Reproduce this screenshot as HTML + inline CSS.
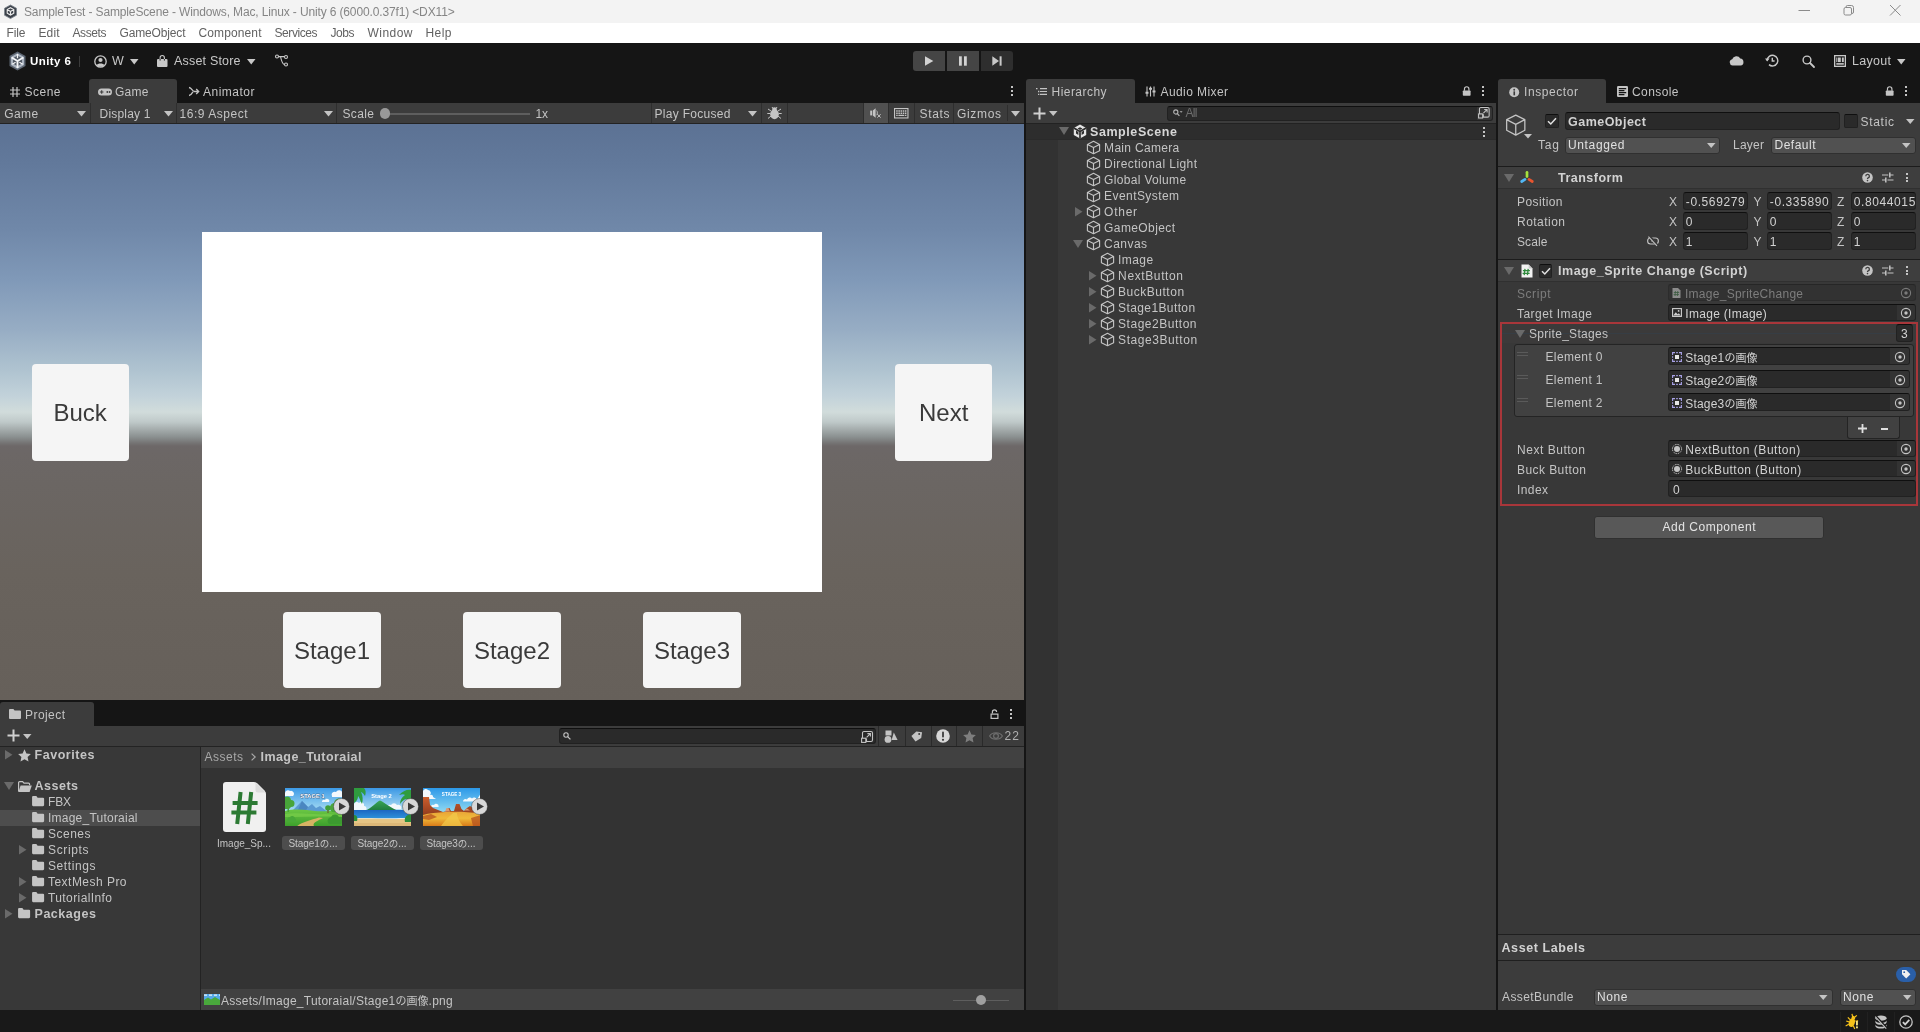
<!DOCTYPE html>
<html lang="ja">
<head>
<meta charset="utf-8">
<title>SampleTest - SampleScene - Windows, Mac, Linux - Unity 6 (6000.0.37f1) &lt;DX11&gt;</title>
<style>
*{box-sizing:border-box;margin:0;padding:0}
html,body{width:1920px;height:1032px;overflow:hidden;background:#151515}
body{position:relative;font-family:"Liberation Sans","Noto Sans CJK JP",sans-serif;font-size:12px;color:#c4c4c4;line-height:1}
.a{position:absolute}
.t{position:absolute;white-space:nowrap;line-height:16px;height:16px}
#root{position:absolute;left:0;top:0;width:1920px;height:1032px;will-change:transform}
.b{font-weight:bold}
svg{position:absolute;overflow:visible}
.fld{position:absolute;background:#2a2a2a;border:1px solid #212121;border-top-color:#0f0f0f;border-radius:3px}
.dd{position:absolute;background:#515151;border:1px solid #303030;border-radius:3px}
.tab{position:absolute;background:#3c3c3c;border-radius:3px 3px 0 0}
.gbtn{position:absolute;background:#f5f5f5;border-radius:4px;color:#3a3a3a;font-size:24px;text-align:center}
</style>
</head>
<body>
<div id="root">
<!-- chrome -->
<div class="a" style="left:0px;top:0px;width:1920px;height:23px;background:#f3f3f3;"></div>
<div class="a" style="left:0px;top:23px;width:1920px;height:20px;background:#ffffff;"></div>
<svg style="left:3px;top:3.5px;" width="15" height="15.5" viewBox="0 0 17 17"><path d="M8.5 0.8 L15.3 4.6 V12.4 L8.5 16.2 L1.7 12.4 V4.6 Z" fill="#3b4149" stroke="#7f8790" stroke-width="1"/><path d="M8.5 3.9 L12.2 6 V10.2 L8.5 12.3 L4.8 10.2 V6 Z M8.5 8.1 V12.3 M8.5 8.1 L4.8 6 M8.5 8.1 L12.2 6" fill="none" stroke="#ececec" stroke-width="1.3"/></svg>
<div class="t" style="left:24px;top:4px;color:#858585;letter-spacing:-0.14px;">SampleTest - SampleScene - Windows, Mac, Linux - Unity 6 (6000.0.37f1) &lt;DX11&gt;</div>
<svg style="left:1798px;top:4px;" width="110" height="14" viewBox="0 0 110 14"><g fill="none" stroke="#858585" stroke-width="0.95"><path d="M0.5 6.5 H12"/><rect x="46" y="3.5" width="7.5" height="7.5" rx="1.5"/><path d="M48 3.5 V3 a1.5 1.5 0 0 1 1.5 -1.5 H53.5 a2 2 0 0 1 2 2 V8 a1.5 1.5 0 0 1 -1.5 1.5 H53.5"/><path d="M92 1 L102.5 11.5 M102.5 1 L92 11.5"/></g></svg>
<div class="t" style="left:6.5px;top:25px;color:#626262;letter-spacing:-0.11px;">File</div>
<div class="t" style="left:38.5px;top:25px;color:#626262;letter-spacing:0.10px;">Edit</div>
<div class="t" style="left:72.5px;top:25px;color:#626262;letter-spacing:-0.40px;">Assets</div>
<div class="t" style="left:119.5px;top:25px;color:#626262;letter-spacing:-0.15px;">GameObject</div>
<div class="t" style="left:198.5px;top:25px;color:#626262;letter-spacing:0.12px;">Component</div>
<div class="t" style="left:274.5px;top:25px;color:#626262;letter-spacing:-0.43px;">Services</div>
<div class="t" style="left:330.5px;top:25px;color:#626262;letter-spacing:-0.45px;">Jobs</div>
<div class="t" style="left:367.5px;top:25px;color:#626262;letter-spacing:0.46px;">Window</div>
<div class="t" style="left:425.5px;top:25px;color:#626262;letter-spacing:0.44px;">Help</div>
<!-- toolbar -->
<div class="a" style="left:0px;top:43px;width:1920px;height:60px;background:#151515;"></div>
<svg style="left:9px;top:51px;" width="17" height="20" viewBox="0 0 17 20"><path d="M8.5 0.5 L16.5 5.1 V14.9 L8.5 19.5 L0.5 14.9 V5.1 Z" fill="#5d6673"/><path d="M8.5 2.2 L15 5.95 V14.05 L8.5 17.8 L2 14.05 V5.95 Z" fill="#aab3bf"/><path d="M8.5 4.6 L12.9 7.2 V12.6 L8.5 15.2 L4.1 12.6 V7.2 Z" fill="#4a525d"/><path d="M8.5 10 V17 M8.5 10 L2.6 6.5 M8.5 10 L14.4 6.5" stroke="#f4f6f8" stroke-width="1.9" fill="none"/><path d="M8.5 3 V7.2 M3.2 13.2 L6.6 11.2 M13.8 13.2 L10.4 11.2" stroke="#f4f6f8" stroke-width="1.3" fill="none"/></svg>
<div class="t b" style="left:30px;top:53px;font-size:11.5px;color:#ffffff;letter-spacing:0.44px;">Unity 6</div>
<div class="a" style="left:79px;top:55.5px;width:1px;height:11px;background:#3a3a3a;"></div>
<svg style="left:94px;top:54.5px;" width="13" height="13" viewBox="0 0 13 13"><circle cx="6.5" cy="6.5" r="5.7" fill="none" stroke="#c8c8c8" stroke-width="1.3"/><circle cx="6.5" cy="5" r="2.1" fill="#c8c8c8"/><path d="M2.6 10.2 C3.4 7.9 9.6 7.9 10.4 10.2 A5.7 5.7 0 0 1 2.6 10.2 Z" fill="#c8c8c8"/></svg>
<div class="t" style="left:112px;top:53px;font-size:12.5px;color:#c8c8c8;">W</div>
<svg style="left:129.75px;top:58.8px;" width="8.5" height="5.4" viewBox="0 0 8.5 5.4"><path d="M0 0 H8.5 L4.25 5.4 Z" fill="#c8c8c8"/></svg>
<svg style="left:157px;top:54.5px;" width="10.5" height="12" viewBox="0 0 10.5 12"><path d="M3.1 4.2 V2.7 A2.15 2.15 0 0 1 7.4 2.7 V4.2" fill="none" stroke="#c8c8c8" stroke-width="1.1"/><rect x="0" y="4" width="10.5" height="8" rx="1" fill="#c8c8c8"/><path d="M3.1 4 V5.6 M7.4 4 V5.6" stroke="#151515" stroke-width="0.9"/></svg>
<div class="t" style="left:174px;top:53px;font-size:12.5px;color:#c8c8c8;letter-spacing:0.19px;">Asset Store</div>
<svg style="left:246.75px;top:58.8px;" width="8.5" height="5.4" viewBox="0 0 8.5 5.4"><path d="M0 0 H8.5 L4.25 5.4 Z" fill="#c8c8c8"/></svg>
<svg style="left:274.5px;top:54px;" width="13" height="13" viewBox="0 0 13 13"><g fill="none" stroke="#c8c8c8" stroke-width="1.1"><circle cx="2" cy="2.5" r="1.5"/><circle cx="11" cy="3" r="1.5"/><circle cx="11" cy="10.5" r="1.5"/><path d="M3.5 2.6 H9.5 M5.5 2.6 C6.5 7 7.5 10.5 9.5 10.5"/></g></svg>
<div class="a" style="left:913px;top:51px;width:32px;height:20px;background:#454545;border-radius:3px 0 0 3px"></div>
<div class="a" style="left:946.5px;top:51px;width:32.5px;height:20px;background:#454545;"></div>
<div class="a" style="left:980.5px;top:51px;width:32px;height:20px;background:#2e2e2e;border-radius:0 3px 3px 0"></div>
<svg style="left:924px;top:56px;" width="10" height="10" viewBox="0 0 10 10"><path d="M1 0.3 L9.3 5 L1 9.7 Z" fill="#d2d2d2"/></svg>
<svg style="left:958px;top:56px;" width="10" height="10" viewBox="0 0 10 10"><rect x="1" y="0.3" width="2.8" height="9.4" fill="#d2d2d2"/><rect x="6" y="0.3" width="2.8" height="9.4" fill="#d2d2d2"/></svg>
<svg style="left:992px;top:56px;" width="10" height="10" viewBox="0 0 10 10"><path d="M0.3 0.3 L7 5 L0.3 9.7 Z" fill="#c8c8c8"/><rect x="7.6" y="0.3" width="2" height="9.4" fill="#c8c8c8"/></svg>
<svg style="left:1729px;top:55px;" width="15" height="11" viewBox="0 0 15 11"><path d="M3.6 10.6 A3.2 3.2 0 0 1 3.2 4.3 A4.4 4.4 0 0 1 11.3 3.5 A3.6 3.6 0 0 1 11.6 10.6 Z" fill="#c8c8c8"/></svg>
<svg style="left:1765px;top:54px;" width="14" height="13" viewBox="0 0 14 13"><g fill="none" stroke="#c8c8c8" stroke-width="1.4"><path d="M2.2 6.5 A5.3 5.3 0 1 1 4 10.6"/><path d="M7.3 3.8 V7 H9.6"/></g><path d="M0 4.6 L4.6 4.6 L2.2 7.6 Z" fill="#c8c8c8"/></svg>
<svg style="left:1801.5px;top:54.5px;" width="13" height="13" viewBox="0 0 13 13"><circle cx="5" cy="5" r="3.9" fill="none" stroke="#c8c8c8" stroke-width="1.4"/><path d="M8 8 L12 12" stroke="#c8c8c8" stroke-width="1.8" stroke-linecap="round"/></svg>
<svg style="left:1834px;top:54.8px;" width="12" height="12" viewBox="0 0 12 12"><rect x="0.65" y="0.65" width="10.7" height="10.7" fill="none" stroke="#c8c8c8" stroke-width="1.3"/><rect x="2.3" y="2.5" width="1" height="4.6" fill="#c8c8c8"/><rect x="3.9" y="2.5" width="2.9" height="4.6" fill="#c8c8c8"/><rect x="7.9" y="2.5" width="1.9" height="4.6" fill="#c8c8c8"/><rect x="2.3" y="8.1" width="7.5" height="1.6" fill="#c8c8c8"/></svg>
<div class="t" style="left:1852px;top:53px;font-size:12.5px;color:#c8c8c8;letter-spacing:0.29px;">Layout</div>
<svg style="left:1897.05px;top:58.8px;" width="8.5" height="5.4" viewBox="0 0 8.5 5.4"><path d="M0 0 H8.5 L4.25 5.4 Z" fill="#c8c8c8"/></svg>
<svg style="left:9.5px;top:86.5px;" width="10" height="10" viewBox="0 0 10 10"><path d="M3 0 V10 M7 0 V10 M0 3 H10 M0 7 H10" stroke="#c4c4c4" stroke-width="1.2" fill="none"/></svg>
<div class="t" style="left:24.5px;top:84px;color:#c4c4c4;letter-spacing:0.49px;">Scene</div>
<div class="tab" style="left:89px;top:79px;width:88px;height:24px;"></div>
<svg style="left:98px;top:87.5px;" width="14" height="8" viewBox="0 0 14 8"><rect x="0" y="0.5" width="14" height="7" rx="3.5" fill="#c4c4c4"/><path d="M3.7 2.2 V5.8 M1.9 4 H5.5" stroke="#3c3c3c" stroke-width="1.1"/><circle cx="9.3" cy="4" r="0.9" fill="#3c3c3c"/><circle cx="11.6" cy="4" r="0.9" fill="#3c3c3c"/></svg>
<div class="t" style="left:115px;top:84px;letter-spacing:0.27px;">Game</div>
<svg style="left:188px;top:86px;" width="11" height="11" viewBox="0 0 11 11"><path d="M1 1.5 C4 2 4 5.5 6.5 5.5 H10.5 M1 9.5 C3 9.5 4 7.5 5 5.8 M8.2 3 L10.7 5.5 L8.2 8" fill="none" stroke="#c4c4c4" stroke-width="1.3"/></svg>
<div class="t" style="left:203px;top:84px;letter-spacing:0.50px;">Animator</div>
<div class="a" style="left:1010.5px;top:86.2px;width:2px;height:2.1px;background:#c4c4c4;"></div>
<div class="a" style="left:1010.5px;top:90px;width:2px;height:2.1px;background:#c4c4c4;"></div>
<div class="a" style="left:1010.5px;top:93.8px;width:2px;height:2.1px;background:#c4c4c4;"></div>
<!-- game -->
<div class="a" style="left:0px;top:103px;width:1024px;height:20px;background:#3c3c3c;"></div>
<div class="a" style="left:0px;top:123px;width:1024px;height:1px;background:#232323;"></div>
<div class="t" style="left:4.2px;top:105.6px;letter-spacing:0.44px;">Game</div>
<svg style="left:77px;top:110.7px;" width="9" height="5.6" viewBox="0 0 9 5.6"><path d="M0 0 H9 L4.5 5.6 Z" fill="#c4c4c4"/></svg>
<div class="a" style="left:90px;top:103px;width:1px;height:20px;background:#2e2e2e;"></div>
<div class="t" style="left:99.5px;top:105.6px;letter-spacing:0.21px;">Display 1</div>
<svg style="left:163.5px;top:110.7px;" width="9" height="5.6" viewBox="0 0 9 5.6"><path d="M0 0 H9 L4.5 5.6 Z" fill="#c4c4c4"/></svg>
<div class="a" style="left:176px;top:103px;width:1px;height:20px;background:#2e2e2e;"></div>
<div class="t" style="left:179.5px;top:105.6px;letter-spacing:0.53px;">16:9 Aspect</div>
<svg style="left:323.5px;top:110.7px;" width="9" height="5.6" viewBox="0 0 9 5.6"><path d="M0 0 H9 L4.5 5.6 Z" fill="#c4c4c4"/></svg>
<div class="a" style="left:336px;top:103px;width:1px;height:20px;background:#2e2e2e;"></div>
<div class="t" style="left:342.5px;top:105.6px;letter-spacing:0.37px;">Scale</div>
<div class="a" style="left:385px;top:113px;width:145px;height:1.5px;background:#5e5e5e;"></div>
<div class="a" style="left:379.5px;top:108px;width:10.5px;height:10.5px;background:#999999;border-radius:50%"></div>
<div class="t" style="left:535.5px;top:105.6px;letter-spacing:-0.19px;">1x</div>
<div class="a" style="left:651px;top:103px;width:1px;height:20px;background:#2e2e2e;"></div>
<div class="t" style="left:654.5px;top:105.6px;letter-spacing:0.30px;">Play Focused</div>
<svg style="left:748px;top:110.7px;" width="9" height="5.6" viewBox="0 0 9 5.6"><path d="M0 0 H9 L4.5 5.6 Z" fill="#c4c4c4"/></svg>
<div class="a" style="left:760.5px;top:103px;width:1px;height:20px;background:#2e2e2e;"></div>
<svg style="left:766.5px;top:106px;" width="15" height="14" viewBox="0 0 15 14"><g stroke="#c4c4c4" stroke-width="1" fill="none"><path d="M1 3 L4 5 M14 3 L11 5 M0.3 7.5 H3.5 M14.7 7.5 H11.5 M1 12.5 L4 10 M14 12.5 L11 10 M5 1 L6.3 3 M10 1 L8.7 3"/></g><ellipse cx="7.5" cy="8.2" rx="4.3" ry="5" fill="#c4c4c4"/><circle cx="7.5" cy="3.4" r="2.2" fill="#c4c4c4"/></svg>
<div class="a" style="left:786.5px;top:103px;width:1px;height:20px;background:#2e2e2e;"></div>
<div class="a" style="left:863px;top:103px;width:25px;height:20px;background:#505050;"></div>
<div class="a" style="left:862.5px;top:103px;width:1px;height:20px;background:#2e2e2e;"></div>
<div class="a" style="left:888px;top:103px;width:1px;height:20px;background:#2e2e2e;"></div>
<svg style="left:869.5px;top:107.5px;" width="12" height="10" viewBox="0 0 12 10"><rect x="0.2" y="2.6" width="1.9" height="4.8" fill="#c4c4c4"/><path d="M2.8 2.6 L5.6 0.2 V9.8 L2.8 7.4 Z" fill="#c4c4c4"/><path d="M6.6 2.6 C7.6 3.6 7.6 6.2 6.6 7.2" stroke="#c4c4c4" stroke-width="0.9" fill="none"/><path d="M7.4 6.2 L10.6 9.6 M10.6 6.2 L7.4 9.6" stroke="#c4c4c4" stroke-width="1"/></svg>
<svg style="left:893.5px;top:108px;" width="14.5" height="10.5" viewBox="0 0 14.5 10.5"><rect x="0.55" y="0.55" width="13.4" height="9.4" fill="none" stroke="#c4c4c4" stroke-width="1.1"/><path d="M2.2 3 H12.4 M2.2 5.2 H12.4" stroke="#c4c4c4" stroke-width="1.4" stroke-dasharray="1.5 0.68"/><path d="M2.2 7.4 H3.7 M4.4 7.4 H10.2 M10.9 7.4 H12.4" stroke="#c4c4c4" stroke-width="1.4"/></svg>
<div class="a" style="left:914px;top:103px;width:1px;height:20px;background:#2e2e2e;"></div>
<div class="t" style="left:919.5px;top:105.6px;letter-spacing:0.66px;">Stats</div>
<div class="a" style="left:953px;top:103px;width:1px;height:20px;background:#2e2e2e;"></div>
<div class="t" style="left:957px;top:105.6px;letter-spacing:0.67px;">Gizmos</div>
<div class="a" style="left:1006.5px;top:105px;width:1px;height:16px;background:#2e2e2e;"></div>
<svg style="left:1010.5px;top:110.7px;" width="9" height="5.6" viewBox="0 0 9 5.6"><path d="M0 0 H9 L4.5 5.6 Z" fill="#c4c4c4"/></svg>
<div class="a" style="left:0;top:124px;width:1024px;height:576px;background:linear-gradient(to bottom,#5c7294 0px,#62799b 40px,#7088a9 106px,#8099b8 156px,#97adc4 206px,#afc3d0 246px,#c2d2da 272px,#d1dcdb 288px,#bfc9c9 298px,#a6aeae 305px,#8a9090 313px,#757474 319px,#6d6868 322px,#6c6766 328px,#6b6663 360px,#69635d 450px,#66605a 576px)"></div>
<div class="a" style="left:202px;top:232px;width:620px;height:360px;background:#ffffff;"></div>
<div class="gbtn" style="left:31.6px;top:363.5px;width:97px;height:97.2px;line-height:98.2px">Buck</div>
<div class="gbtn" style="left:895.2px;top:363.5px;width:97px;height:97.2px;line-height:98.2px">Next</div>
<div class="gbtn" style="left:283.2px;top:611.7px;width:97.6px;height:76.6px;line-height:77.6px">Stage1</div>
<div class="gbtn" style="left:463.2px;top:611.7px;width:97.6px;height:76.6px;line-height:77.6px">Stage2</div>
<div class="gbtn" style="left:643.2px;top:611.7px;width:97.6px;height:76.6px;line-height:77.6px">Stage3</div>
<!-- hierarchy -->
<div class="a" style="left:1026px;top:103px;width:470px;height:907px;background:#383838;"></div>
<div class="a" style="left:1026px;top:103px;width:470px;height:20px;background:#3c3c3c;"></div>
<div class="a" style="left:1026px;top:139px;width:32px;height:871px;background:#323232;"></div>
<div class="tab" style="left:1026px;top:79px;width:109px;height:24px;"></div>
<svg style="left:1036.3px;top:87px;" width="11" height="9" viewBox="0 0 11 9"><path d="M4 1.6 H11 M4 4.5 H11 M4 7.4 H11" stroke="#c4c4c4" stroke-width="1.15"/><path d="M0 1.6 H1.5 M2 4.5 H3.3 M2 7.4 H3.3" stroke="#c4c4c4" stroke-width="1.3"/></svg>
<div class="t" style="left:1051.5px;top:84px;letter-spacing:0.46px;">Hierarchy</div>
<svg style="left:1145px;top:86px;" width="11" height="11" viewBox="0 0 11 11"><path d="M2 0.5 V10.5 M5.5 0.5 V10.5 M9 0.5 V10.5" stroke="#c4c4c4" stroke-width="1.1"/><path d="M0.5 6.8 H3.5 M4 2.8 H7 M7.5 5.6 H10.5" stroke="#c4c4c4" stroke-width="2"/></svg>
<div class="t" style="left:1160.5px;top:84px;letter-spacing:0.41px;">Audio Mixer</div>
<svg style="left:1461.5px;top:86px;" width="9.4" height="10.2" viewBox="0 0 10 11"><path d="M2.6 5 V3.2 A2.4 2.4 0 0 1 7.4 3.2 V5" fill="none" stroke="#c4c4c4" stroke-width="1.3"/><rect x="0.8" y="4.8" width="8.4" height="5.8" rx="0.8" fill="#c4c4c4"/></svg>
<div class="a" style="left:1482px;top:86.2px;width:2px;height:2.1px;background:#c4c4c4;"></div>
<div class="a" style="left:1482px;top:90px;width:2px;height:2.1px;background:#c4c4c4;"></div>
<div class="a" style="left:1482px;top:93.8px;width:2px;height:2.1px;background:#c4c4c4;"></div>
<svg style="left:1032.5px;top:107px;" width="13" height="13" viewBox="0 0 13 13"><path d="M6.5 0.5 V12.5 M0.5 6.5 H12.5" stroke="#d0d0d0" stroke-width="2"/></svg>
<svg style="left:1048.75px;top:110.95px;" width="8.5" height="5.1" viewBox="0 0 8.5 5.1"><path d="M0 0 H8.5 L4.25 5.1 Z" fill="#c4c4c4"/></svg>
<div class="fld" style="left:1167px;top:105.5px;width:325.5px;height:15.5px;border-radius:3px"></div>
<div class="a" style="left:1476.5px;top:106.5px;width:15.5px;height:13.5px;background:#353535;border-radius:0 2px 2px 0"></div>
<svg style="left:1173px;top:109px;" width="10" height="8" viewBox="0 0 10 8"><circle cx="2.8" cy="3" r="2.1" fill="none" stroke="#b4b4b4" stroke-width="1.1"/><path d="M4.3 4.6 L6.4 6.8" stroke="#b4b4b4" stroke-width="1.2"/><path d="M6.6 2.2 H9.6 L8.1 3.8 Z" fill="#b4b4b4"/></svg>
<div class="t" style="left:1185.5px;top:105px;color:#6e6e6e;letter-spacing:-0.67px;">All</div>
<svg style="left:1477.7px;top:106px;" width="12.6" height="12.6" viewBox="0 0 13 13"><path d="M4 8.5 H1.5 V3 a1.5 1.5 0 0 1 1.5 -1.5 H10 a1.5 1.5 0 0 1 1.5 1.5 V10 a1.5 1.5 0 0 1 -1.5 1.5 H5.5 V8.5" fill="none" stroke="#c4c4c4" stroke-width="1.1"/><rect x="0.6" y="8.2" width="4.2" height="4.2" fill="#383838" stroke="#c4c4c4" stroke-width="1.1"/><path d="M5.6 7.4 L9.4 3.6 M6.4 3.6 H9.4 V6.6" fill="none" stroke="#c4c4c4" stroke-width="1.1"/></svg>
<div class="a" style="left:1026px;top:123px;width:470px;height:16px;background:#2d2d2d;"></div>
<div class="a" style="left:1026px;top:123px;width:470px;height:1px;background:#222222;"></div>
<div class="a" style="left:1026px;top:139px;width:470px;height:1px;background:#2a2a2a;"></div>
<svg style="left:1059px;top:127.2px;" width="10" height="8" viewBox="0 0 10 8"><path d="M0 0 H10 L5 8 Z" fill="#6a6a6a"/></svg>
<svg style="left:1073px;top:124px;" width="14" height="15" viewBox="0 0 14 15"><path d="M7 0.5 L13.2 4 V11 L7 14.5 L0.8 11 V4 Z" fill="#e4e4e4"/><path d="M7 7.6 V14.5 M7 7.6 L0.8 4 M7 7.6 L13.2 4" stroke="#2d2d2d" stroke-width="1.7" fill="none"/><path d="M7 3.2 L4.6 4.6 L7 6 L9.4 4.6 Z M3 6.6 V9.6 L5.4 11 V8 Z M11 6.6 V9.6 L8.6 11 V8 Z" fill="#2d2d2d"/></svg>
<div class="t b" style="left:1090px;top:123.7px;font-size:12.5px;color:#d6d6d6;letter-spacing:0.57px;">SampleScene</div>
<div class="a" style="left:1483px;top:127.2px;width:2px;height:2.1px;background:#c4c4c4;"></div>
<div class="a" style="left:1483px;top:131px;width:2px;height:2.1px;background:#c4c4c4;"></div>
<div class="a" style="left:1483px;top:134.8px;width:2px;height:2.1px;background:#c4c4c4;"></div>
<svg style="left:1086px;top:140.4px;" width="15" height="15" viewBox="0 0 16 16"><path d="M8 1.4 L14.5 4.7 V11.5 L8 14.7 L1.5 11.5 V4.7 Z M1.5 4.7 L8 8 L14.5 4.7 M8 8 V14.7" fill="none" stroke="#c4c4c4" stroke-width="1.2" stroke-linejoin="round"/></svg>
<div class="t" style="left:1104.1px;top:140px;letter-spacing:0.30px;">Main Camera</div>
<svg style="left:1086px;top:156.4px;" width="15" height="15" viewBox="0 0 16 16"><path d="M8 1.4 L14.5 4.7 V11.5 L8 14.7 L1.5 11.5 V4.7 Z M1.5 4.7 L8 8 L14.5 4.7 M8 8 V14.7" fill="none" stroke="#c4c4c4" stroke-width="1.2" stroke-linejoin="round"/></svg>
<div class="t" style="left:1104.1px;top:156px;letter-spacing:0.43px;">Directional Light</div>
<svg style="left:1086px;top:172.4px;" width="15" height="15" viewBox="0 0 16 16"><path d="M8 1.4 L14.5 4.7 V11.5 L8 14.7 L1.5 11.5 V4.7 Z M1.5 4.7 L8 8 L14.5 4.7 M8 8 V14.7" fill="none" stroke="#c4c4c4" stroke-width="1.2" stroke-linejoin="round"/></svg>
<div class="t" style="left:1104.1px;top:172px;letter-spacing:0.33px;">Global Volume</div>
<svg style="left:1086px;top:188.4px;" width="15" height="15" viewBox="0 0 16 16"><path d="M8 1.4 L14.5 4.7 V11.5 L8 14.7 L1.5 11.5 V4.7 Z M1.5 4.7 L8 8 L14.5 4.7 M8 8 V14.7" fill="none" stroke="#c4c4c4" stroke-width="1.2" stroke-linejoin="round"/></svg>
<div class="t" style="left:1104.1px;top:188px;letter-spacing:0.43px;">EventSystem</div>
<svg style="left:1086px;top:204.4px;" width="15" height="15" viewBox="0 0 16 16"><path d="M8 1.4 L14.5 4.7 V11.5 L8 14.7 L1.5 11.5 V4.7 Z M1.5 4.7 L8 8 L14.5 4.7 M8 8 V14.7" fill="none" stroke="#c4c4c4" stroke-width="1.2" stroke-linejoin="round"/></svg>
<div class="t" style="left:1104.1px;top:204px;letter-spacing:0.75px;">Other</div>
<svg style="left:1074.95px;top:207.25px;" width="7.5" height="9.5" viewBox="0 0 7.5 9.5"><path d="M0 0 V9.5 L7.5 4.75 Z" fill="#6a6a6a"/></svg>
<svg style="left:1086px;top:220.4px;" width="15" height="15" viewBox="0 0 16 16"><path d="M8 1.4 L14.5 4.7 V11.5 L8 14.7 L1.5 11.5 V4.7 Z M1.5 4.7 L8 8 L14.5 4.7 M8 8 V14.7" fill="none" stroke="#c4c4c4" stroke-width="1.2" stroke-linejoin="round"/></svg>
<div class="t" style="left:1104.1px;top:220px;letter-spacing:0.40px;">GameObject</div>
<svg style="left:1086px;top:236.4px;" width="15" height="15" viewBox="0 0 16 16"><path d="M8 1.4 L14.5 4.7 V11.5 L8 14.7 L1.5 11.5 V4.7 Z M1.5 4.7 L8 8 L14.5 4.7 M8 8 V14.7" fill="none" stroke="#c4c4c4" stroke-width="1.2" stroke-linejoin="round"/></svg>
<div class="t" style="left:1104.1px;top:236px;letter-spacing:0.46px;">Canvas</div>
<svg style="left:1073px;top:240px;" width="10" height="8" viewBox="0 0 10 8"><path d="M0 0 H10 L5 8 Z" fill="#6a6a6a"/></svg>
<svg style="left:1100px;top:252.4px;" width="15" height="15" viewBox="0 0 16 16"><path d="M8 1.4 L14.5 4.7 V11.5 L8 14.7 L1.5 11.5 V4.7 Z M1.5 4.7 L8 8 L14.5 4.7 M8 8 V14.7" fill="none" stroke="#c4c4c4" stroke-width="1.2" stroke-linejoin="round"/></svg>
<div class="t" style="left:1118.1px;top:252px;letter-spacing:0.41px;">Image</div>
<svg style="left:1100px;top:268.4px;" width="15" height="15" viewBox="0 0 16 16"><path d="M8 1.4 L14.5 4.7 V11.5 L8 14.7 L1.5 11.5 V4.7 Z M1.5 4.7 L8 8 L14.5 4.7 M8 8 V14.7" fill="none" stroke="#c4c4c4" stroke-width="1.2" stroke-linejoin="round"/></svg>
<div class="t" style="left:1118.1px;top:268px;letter-spacing:0.62px;">NextButton</div>
<svg style="left:1088.95px;top:271.25px;" width="7.5" height="9.5" viewBox="0 0 7.5 9.5"><path d="M0 0 V9.5 L7.5 4.75 Z" fill="#6a6a6a"/></svg>
<svg style="left:1100px;top:284.4px;" width="15" height="15" viewBox="0 0 16 16"><path d="M8 1.4 L14.5 4.7 V11.5 L8 14.7 L1.5 11.5 V4.7 Z M1.5 4.7 L8 8 L14.5 4.7 M8 8 V14.7" fill="none" stroke="#c4c4c4" stroke-width="1.2" stroke-linejoin="round"/></svg>
<div class="t" style="left:1118.1px;top:284px;letter-spacing:0.51px;">BuckButton</div>
<svg style="left:1088.95px;top:287.25px;" width="7.5" height="9.5" viewBox="0 0 7.5 9.5"><path d="M0 0 V9.5 L7.5 4.75 Z" fill="#6a6a6a"/></svg>
<svg style="left:1100px;top:300.4px;" width="15" height="15" viewBox="0 0 16 16"><path d="M8 1.4 L14.5 4.7 V11.5 L8 14.7 L1.5 11.5 V4.7 Z M1.5 4.7 L8 8 L14.5 4.7 M8 8 V14.7" fill="none" stroke="#c4c4c4" stroke-width="1.2" stroke-linejoin="round"/></svg>
<div class="t" style="left:1118.1px;top:300px;letter-spacing:0.39px;">Stage1Button</div>
<svg style="left:1088.95px;top:303.25px;" width="7.5" height="9.5" viewBox="0 0 7.5 9.5"><path d="M0 0 V9.5 L7.5 4.75 Z" fill="#6a6a6a"/></svg>
<svg style="left:1100px;top:316.4px;" width="15" height="15" viewBox="0 0 16 16"><path d="M8 1.4 L14.5 4.7 V11.5 L8 14.7 L1.5 11.5 V4.7 Z M1.5 4.7 L8 8 L14.5 4.7 M8 8 V14.7" fill="none" stroke="#c4c4c4" stroke-width="1.2" stroke-linejoin="round"/></svg>
<div class="t" style="left:1118.1px;top:316px;letter-spacing:0.52px;">Stage2Button</div>
<svg style="left:1088.95px;top:319.25px;" width="7.5" height="9.5" viewBox="0 0 7.5 9.5"><path d="M0 0 V9.5 L7.5 4.75 Z" fill="#6a6a6a"/></svg>
<svg style="left:1100px;top:332.4px;" width="15" height="15" viewBox="0 0 16 16"><path d="M8 1.4 L14.5 4.7 V11.5 L8 14.7 L1.5 11.5 V4.7 Z M1.5 4.7 L8 8 L14.5 4.7 M8 8 V14.7" fill="none" stroke="#c4c4c4" stroke-width="1.2" stroke-linejoin="round"/></svg>
<div class="t" style="left:1118.1px;top:332px;letter-spacing:0.57px;">Stage3Button</div>
<svg style="left:1088.95px;top:335.25px;" width="7.5" height="9.5" viewBox="0 0 7.5 9.5"><path d="M0 0 V9.5 L7.5 4.75 Z" fill="#6a6a6a"/></svg>
<!-- inspector -->
<div class="a" style="left:1498px;top:103px;width:422px;height:907px;background:#383838;"></div>
<div class="a" style="left:1498px;top:103px;width:422px;height:63px;background:#3c3c3c;"></div>
<div class="tab" style="left:1498px;top:79px;width:108px;height:24px;"></div>
<svg style="left:1509px;top:86.6px;" width="10.4" height="10.4" viewBox="0 0 11 11"><circle cx="5.5" cy="5.5" r="5.3" fill="#c4c4c4"/><rect x="4.7" y="4.6" width="1.7" height="4.2" fill="#3c3c3c"/><circle cx="5.5" cy="2.9" r="1" fill="#3c3c3c"/></svg>
<div class="t" style="left:1524px;top:84px;letter-spacing:0.58px;">Inspector</div>
<svg style="left:1616.5px;top:86px;" width="11" height="11" viewBox="0 0 11 11"><rect x="0" y="0" width="11" height="11" rx="1.2" fill="#c4c4c4"/><path d="M1.8 2.6 H9.2 M1.8 6.6 H9.2" stroke="#151515" stroke-width="1.1"/><path d="M1.8 4.6 H7.4 M1.8 8.6 H7.4" stroke="#151515" stroke-width="1.1"/></svg>
<div class="t" style="left:1632px;top:84px;letter-spacing:0.41px;">Console</div>
<svg style="left:1884.5px;top:86px;" width="9.4" height="10.2" viewBox="0 0 10 11"><path d="M2.6 5 V3.2 A2.4 2.4 0 0 1 7.4 3.2 V5" fill="none" stroke="#c4c4c4" stroke-width="1.3"/><rect x="0.8" y="4.8" width="8.4" height="5.8" rx="0.8" fill="#c4c4c4"/></svg>
<div class="a" style="left:1905px;top:86.2px;width:2px;height:2.1px;background:#c4c4c4;"></div>
<div class="a" style="left:1905px;top:90px;width:2px;height:2.1px;background:#c4c4c4;"></div>
<div class="a" style="left:1905px;top:93.8px;width:2px;height:2.1px;background:#c4c4c4;"></div>
<svg style="left:1505px;top:113.5px;" width="21.5" height="22.5" viewBox="0 0 22 23"><path d="M11 1.2 L20.3 5.8 V16.6 L11 21.6 L1.7 16.6 V5.8 Z M1.7 5.8 L11 10.6 L20.3 5.8 M11 10.6 V21.6" fill="none" stroke="#c4c4c4" stroke-width="1.3" stroke-linejoin="round"/></svg>
<svg style="left:1524.2px;top:133.7px;" width="8" height="4.6" viewBox="0 0 8 4.6"><path d="M0 0 H8 L4 4.6 Z" fill="#c4c4c4"/></svg>
<div class="fld" style="left:1545px;top:114px;width:14px;height:14px;border-radius:2px"></div>
<svg style="left:1547px;top:117px;" width="10" height="8" viewBox="0 0 10 8"><path d="M1 4.2 L3.8 7 L9 1.2" fill="none" stroke="#e0e0e0" stroke-width="1.5"/></svg>
<div class="fld" style="left:1565px;top:112px;width:274.5px;height:18px;"></div>
<div class="t b" style="left:1568px;top:113.7px;font-size:12.5px;color:#d2d2d2;letter-spacing:0.48px;">GameObject</div>
<div class="fld" style="left:1844px;top:114px;width:13.5px;height:13.5px;border-radius:2px"></div>
<div class="t" style="left:1860.5px;top:113.5px;letter-spacing:0.70px;">Static</div>
<svg style="left:1905.75px;top:118.95px;" width="8.5" height="5.1" viewBox="0 0 8.5 5.1"><path d="M0 0 H8.5 L4.25 5.1 Z" fill="#c4c4c4"/></svg>
<div class="t" style="left:1538px;top:137.3px;letter-spacing:0.82px;">Tag</div>
<div class="dd" style="left:1565px;top:137px;width:155px;height:16.5px;"></div>
<div class="t" style="left:1568px;top:137px;color:#e0e0e0;letter-spacing:0.64px;">Untagged</div>
<svg style="left:1706.75px;top:142.95px;" width="8.5" height="5.1" viewBox="0 0 8.5 5.1"><path d="M0 0 H8.5 L4.25 5.1 Z" fill="#c4c4c4"/></svg>
<div class="t" style="left:1733px;top:137.3px;letter-spacing:0.24px;">Layer</div>
<div class="dd" style="left:1771px;top:137px;width:144.5px;height:16.5px;"></div>
<div class="t" style="left:1774.5px;top:137px;color:#e0e0e0;letter-spacing:0.49px;">Default</div>
<svg style="left:1901.75px;top:142.95px;" width="8.5" height="5.1" viewBox="0 0 8.5 5.1"><path d="M0 0 H8.5 L4.25 5.1 Z" fill="#c4c4c4"/></svg>
<div class="a" style="left:1498px;top:166px;width:422px;height:1px;background:#1c1c1c;"></div>
<div class="a" style="left:1498px;top:167px;width:422px;height:21px;background:#3e3e3e;"></div>
<div class="a" style="left:1498px;top:188px;width:422px;height:1px;background:#303030;"></div>
<svg style="left:1503.5px;top:173.5px;" width="10" height="8" viewBox="0 0 10 8"><path d="M0 0 H10 L5 8 Z" fill="#6a6a6a"/></svg>
<svg style="left:1861.5px;top:172px;" width="11" height="11" viewBox="0 0 11 11"><circle cx="5.5" cy="5.5" r="5.3" fill="#c4c4c4"/><path d="M3.8 4.3 A1.8 1.8 0 1 1 5.9 6 Q5.5 6.2 5.5 7" fill="none" stroke="#3e3e3e" stroke-width="1.3"/><circle cx="5.5" cy="8.6" r="0.8" fill="#3e3e3e"/></svg>
<svg style="left:1881.5px;top:172px;" width="12" height="11" viewBox="0 0 12 11"><path d="M0 3 H11.5 M0 8 H11.5" stroke="#c4c4c4" stroke-width="1.1"/><path d="M7.8 0.6 V5.4 M3.8 5.6 V10.4" stroke="#c4c4c4" stroke-width="1.5"/><path d="M6 3 H7" stroke="#3e3e3e" stroke-width="1.3"/><path d="M4.6 8 H5.6" stroke="#3e3e3e" stroke-width="1.3"/></svg>
<div class="a" style="left:1906px;top:172.7px;width:2px;height:2.1px;background:#c4c4c4;"></div>
<div class="a" style="left:1906px;top:176.5px;width:2px;height:2.1px;background:#c4c4c4;"></div>
<div class="a" style="left:1906px;top:180.3px;width:2px;height:2.1px;background:#c4c4c4;"></div>
<svg style="left:1519.5px;top:171px;" width="14" height="13" viewBox="0 0 14 13"><path d="M7 1.3 V5.6" stroke="#a5e23c" stroke-width="2.7" stroke-linecap="round"/><path d="M9 8.4 L12.3 10.5" stroke="#e8552f" stroke-width="2.8" stroke-linecap="round"/><path d="M5 8.4 L1.7 10.5" stroke="#52b7f5" stroke-width="2.8" stroke-linecap="round"/></svg>
<div class="t b" style="left:1558px;top:169.5px;font-size:12.5px;color:#d2d2d2;letter-spacing:0.48px;">Transform</div>
<div class="t" style="left:1517px;top:193.5px;letter-spacing:0.40px;">Position</div>
<div class="t" style="left:1669px;top:193.5px;">X</div>
<div class="fld" style="left:1683.0px;top:192.0px;width:64.5px;height:17.5px;overflow:hidden"><div class="t" style="left:1.8px;top:0.8px;color:#d2d2d2;letter-spacing:0.6px">-0.569279</div></div>
<div class="t" style="left:1753.5px;top:193.5px;">Y</div>
<div class="fld" style="left:1767.0px;top:192.0px;width:64.5px;height:17.5px;overflow:hidden"><div class="t" style="left:1.8px;top:0.8px;color:#d2d2d2;letter-spacing:0.6px">-0.335890</div></div>
<div class="t" style="left:1837px;top:193.5px;">Z</div>
<div class="fld" style="left:1851.0px;top:192.0px;width:64.5px;height:17.5px;overflow:hidden"><div class="t" style="left:1.8px;top:0.8px;color:#d2d2d2;letter-spacing:0.6px">0.8044015</div></div>
<div class="t" style="left:1517px;top:213.5px;letter-spacing:0.47px;">Rotation</div>
<div class="t" style="left:1669px;top:213.5px;">X</div>
<div class="fld" style="left:1683.0px;top:212.0px;width:64.5px;height:17.5px;overflow:hidden"><div class="t" style="left:1.8px;top:0.8px;color:#d2d2d2;letter-spacing:0.6px">0</div></div>
<div class="t" style="left:1753.5px;top:213.5px;">Y</div>
<div class="fld" style="left:1767.0px;top:212.0px;width:64.5px;height:17.5px;overflow:hidden"><div class="t" style="left:1.8px;top:0.8px;color:#d2d2d2;letter-spacing:0.6px">0</div></div>
<div class="t" style="left:1837px;top:213.5px;">Z</div>
<div class="fld" style="left:1851.0px;top:212.0px;width:64.5px;height:17.5px;overflow:hidden"><div class="t" style="left:1.8px;top:0.8px;color:#d2d2d2;letter-spacing:0.6px">0</div></div>
<div class="t" style="left:1517px;top:233.5px;letter-spacing:0.12px;">Scale</div>
<div class="t" style="left:1669px;top:233.5px;">X</div>
<div class="fld" style="left:1683.0px;top:232.0px;width:64.5px;height:17.5px;overflow:hidden"><div class="t" style="left:1.8px;top:0.8px;color:#d2d2d2;letter-spacing:0.6px">1</div></div>
<div class="t" style="left:1753.5px;top:233.5px;">Y</div>
<div class="fld" style="left:1767.0px;top:232.0px;width:64.5px;height:17.5px;overflow:hidden"><div class="t" style="left:1.8px;top:0.8px;color:#d2d2d2;letter-spacing:0.6px">1</div></div>
<div class="t" style="left:1837px;top:233.5px;">Z</div>
<div class="fld" style="left:1851.0px;top:232.0px;width:64.5px;height:17.5px;overflow:hidden"><div class="t" style="left:1.8px;top:0.8px;color:#d2d2d2;letter-spacing:0.6px">1</div></div>
<svg style="left:1646.8px;top:235.5px;" width="12" height="10" viewBox="0 0 12 10"><rect x="0.6" y="2" width="10.8" height="6" rx="3" fill="none" stroke="#c4c4c4" stroke-width="1.1"/><path d="M4.4 5 H7.6" stroke="#c4c4c4" stroke-width="1.1"/><path d="M2.2 0.2 L10.6 9.6" stroke="#383838" stroke-width="2.6"/><path d="M1.4 0.6 L10 9.8" stroke="#c4c4c4" stroke-width="1.1"/></svg>
<div class="a" style="left:1498px;top:259px;width:422px;height:1px;background:#1c1c1c;"></div>
<div class="a" style="left:1498px;top:260px;width:422px;height:21px;background:#3e3e3e;"></div>
<div class="a" style="left:1498px;top:281px;width:422px;height:1px;background:#303030;"></div>
<svg style="left:1503.5px;top:266.5px;" width="10" height="8" viewBox="0 0 10 8"><path d="M0 0 H10 L5 8 Z" fill="#6a6a6a"/></svg>
<svg style="left:1861.5px;top:265px;" width="11" height="11" viewBox="0 0 11 11"><circle cx="5.5" cy="5.5" r="5.3" fill="#c4c4c4"/><path d="M3.8 4.3 A1.8 1.8 0 1 1 5.9 6 Q5.5 6.2 5.5 7" fill="none" stroke="#3e3e3e" stroke-width="1.3"/><circle cx="5.5" cy="8.6" r="0.8" fill="#3e3e3e"/></svg>
<svg style="left:1881.5px;top:265px;" width="12" height="11" viewBox="0 0 12 11"><path d="M0 3 H11.5 M0 8 H11.5" stroke="#c4c4c4" stroke-width="1.1"/><path d="M7.8 0.6 V5.4 M3.8 5.6 V10.4" stroke="#c4c4c4" stroke-width="1.5"/><path d="M6 3 H7" stroke="#3e3e3e" stroke-width="1.3"/><path d="M4.6 8 H5.6" stroke="#3e3e3e" stroke-width="1.3"/></svg>
<div class="a" style="left:1906px;top:265.7px;width:2px;height:2.1px;background:#c4c4c4;"></div>
<div class="a" style="left:1906px;top:269.5px;width:2px;height:2.1px;background:#c4c4c4;"></div>
<div class="a" style="left:1906px;top:273.3px;width:2px;height:2.1px;background:#c4c4c4;"></div>
<svg style="left:1519.5px;top:263.5px;" width="13" height="14" viewBox="0 0 13 14"><path d="M1.5 0.5 H8.6 L12.5 4.4 V13.5 H1.5 Z" fill="#f2f2f2"/><path d="M8.6 0.5 V4.4 H12.5 Z" fill="#c9c9c9"/><path d="M5 4.8 L4.2 11.2 M8.2 4.8 L7.4 11.2 M2.9 6.7 H9.9 M2.6 9.3 H9.6" stroke="#2f8a3c" stroke-width="1.3" fill="none"/></svg>
<div class="fld" style="left:1538.5px;top:264px;width:13.5px;height:13.5px;border-radius:2px"></div>
<svg style="left:1540.5px;top:267px;" width="10" height="8" viewBox="0 0 10 8"><path d="M1 4.2 L3.8 7 L9 1.2" fill="none" stroke="#e0e0e0" stroke-width="1.5"/></svg>
<div class="t b" style="left:1558px;top:262.8px;font-size:12.5px;color:#d2d2d2;letter-spacing:0.52px;">Image_Sprite Change (Script)</div>
<div class="t" style="left:1517px;top:285.5px;color:#7d7d7d;letter-spacing:0.56px;">Script</div>
<div class="fld" style="left:1668px;top:283.8px;width:247.5px;height:17.6px;background:#323232;border-color:#2c2c2c;border-top-color:#262626"></div>
<svg style="left:1672px;top:287.8px;" width="9" height="10" viewBox="0 0 9 10"><path d="M0.5 0 H6 L8.5 2.5 V10 H0.5 Z" fill="#8c8c8c"/><path d="M3.4 3 L3 8 M5.8 3 L5.4 8 M1.8 4.5 H7.2 M1.6 6.6 H7" stroke="#3b5a40" stroke-width="0.8"/></svg>
<svg style="left:1899.5px;top:286.8px;" width="12" height="12" viewBox="0 0 12 12"><circle cx="6" cy="6" r="4.6" fill="none" stroke="#7a7a7a" stroke-width="1.1"/><circle cx="6" cy="6" r="1.7" fill="#7a7a7a"/></svg>
<div class="t" style="left:1685px;top:285.8px;color:#7d7d7d;letter-spacing:0.27px;">Image_SpriteChange</div>
<div class="t" style="left:1517px;top:305.5px;letter-spacing:0.45px;">Target Image</div>
<div class="fld" style="left:1668.0px;top:303.7px;width:247.5px;height:17.6px"></div>
<div class="a" style="left:1896.5px;top:304.7px;width:18px;height:15.6px;background:#333333;border-radius:0 2px 2px 0"></div>
<svg style="left:1899.7px;top:306.5px;" width="12" height="12" viewBox="0 0 12 12"><circle cx="6" cy="6" r="4.6" fill="none" stroke="#c4c4c4" stroke-width="1.1"/><circle cx="6" cy="6" r="1.7" fill="#c4c4c4"/></svg>
<svg style="left:1672px;top:307.7px;" width="10" height="9" viewBox="0 0 10 9"><rect x="0.6" y="0.6" width="8.8" height="7.8" fill="none" stroke="#d0d0d0" stroke-width="1.1"/><path d="M1.2 7.6 L3.8 4.2 L5.6 6.2 L6.8 5.2 L8.8 7.6 Z" fill="#d0d0d0"/><circle cx="6.6" cy="2.9" r="0.9" fill="#d0d0d0"/></svg>
<div class="t" style="left:1685.3px;top:305.6px;color:#d2d2d2;letter-spacing:0.29px;">Image (Image)</div>
<div class="a" style="left:1500px;top:322px;width:418px;height:184px;border:2px solid #a8363a;z-index:5"></div>
<div class="a" style="left:1500px;top:324px;width:418px;height:18.5px;background:#3b3a3a;"></div>
<div class="a" style="left:1502px;top:332.5px;width:394px;height:1px;background:#363d44;"></div>
<svg style="left:1514.5px;top:329.8px;" width="10" height="8" viewBox="0 0 10 8"><path d="M0 0 H10 L5 8 Z" fill="#6a6a6a"/></svg>
<div class="t" style="left:1529px;top:325.7px;letter-spacing:0.30px;">Sprite_Stages</div>
<div class="fld" style="left:1896px;top:324px;width:17px;height:18px;"></div>
<div class="t" style="left:1901px;top:326px;color:#d2d2d2;">3</div>
<div class="a" style="left:1513.5px;top:343.5px;width:400.5px;height:73.5px;background:#414141;border:1px solid #242424;border-radius:3px"></div>
<div class="a" style="left:1517px;top:352px;width:10.5px;height:1px;background:#5a5a5a;"></div>
<div class="a" style="left:1517px;top:355px;width:10.5px;height:1px;background:#5a5a5a;"></div>
<div class="t" style="left:1545.5px;top:348.7px;letter-spacing:0.37px;">Element 0</div>
<div class="fld" style="left:1668.0px;top:347.2px;width:241.5px;height:18px"></div>
<div class="a" style="left:1889.5px;top:348.2px;width:19px;height:16px;background:#333333;border-radius:0 2px 2px 0"></div>
<svg style="left:1894px;top:351.2px;" width="12" height="12" viewBox="0 0 12 12"><circle cx="6" cy="6" r="4.6" fill="none" stroke="#c4c4c4" stroke-width="1.1"/><circle cx="6" cy="6" r="1.7" fill="#c4c4c4"/></svg>
<svg style="left:1672px;top:352.4px;" width="10" height="10" viewBox="0 0 10 10"><path d="M0.6 3 V0.6 H3 M7 0.6 H9.4 V3 M9.4 7 V9.4 H7 M3 9.4 H0.6 V7" fill="none" stroke="#a9a2e8" stroke-width="1.1"/><path d="M0.6 4.2 V5.8 M9.4 4.2 V5.8 M4.2 0.6 H5.8 M4.2 9.4 H5.8" stroke="#a9a2e8" stroke-width="1.1"/><rect x="3" y="3" width="4" height="4" fill="#e6e6e6"/></svg>
<div class="t" style="left:1685.3px;top:350.3px;color:#d2d2d2;letter-spacing:0.18px;">Stage1<span style="font-size:11px;letter-spacing:0px">の画像</span></div>
<div class="a" style="left:1517px;top:375px;width:10.5px;height:1px;background:#5a5a5a;"></div>
<div class="a" style="left:1517px;top:378px;width:10.5px;height:1px;background:#5a5a5a;"></div>
<div class="t" style="left:1545.5px;top:371.7px;letter-spacing:0.37px;">Element 1</div>
<div class="fld" style="left:1668.0px;top:370.2px;width:241.5px;height:18px"></div>
<div class="a" style="left:1889.5px;top:371.2px;width:19px;height:16px;background:#333333;border-radius:0 2px 2px 0"></div>
<svg style="left:1894px;top:374.2px;" width="12" height="12" viewBox="0 0 12 12"><circle cx="6" cy="6" r="4.6" fill="none" stroke="#c4c4c4" stroke-width="1.1"/><circle cx="6" cy="6" r="1.7" fill="#c4c4c4"/></svg>
<svg style="left:1672px;top:375.4px;" width="10" height="10" viewBox="0 0 10 10"><path d="M0.6 3 V0.6 H3 M7 0.6 H9.4 V3 M9.4 7 V9.4 H7 M3 9.4 H0.6 V7" fill="none" stroke="#a9a2e8" stroke-width="1.1"/><path d="M0.6 4.2 V5.8 M9.4 4.2 V5.8 M4.2 0.6 H5.8 M4.2 9.4 H5.8" stroke="#a9a2e8" stroke-width="1.1"/><rect x="3" y="3" width="4" height="4" fill="#e6e6e6"/></svg>
<div class="t" style="left:1685.3px;top:373.3px;color:#d2d2d2;letter-spacing:0.18px;">Stage2<span style="font-size:11px;letter-spacing:0px">の画像</span></div>
<div class="a" style="left:1517px;top:398px;width:10.5px;height:1px;background:#5a5a5a;"></div>
<div class="a" style="left:1517px;top:401px;width:10.5px;height:1px;background:#5a5a5a;"></div>
<div class="t" style="left:1545.5px;top:394.7px;letter-spacing:0.37px;">Element 2</div>
<div class="fld" style="left:1668.0px;top:393.2px;width:241.5px;height:18px"></div>
<div class="a" style="left:1889.5px;top:394.2px;width:19px;height:16px;background:#333333;border-radius:0 2px 2px 0"></div>
<svg style="left:1894px;top:397.2px;" width="12" height="12" viewBox="0 0 12 12"><circle cx="6" cy="6" r="4.6" fill="none" stroke="#c4c4c4" stroke-width="1.1"/><circle cx="6" cy="6" r="1.7" fill="#c4c4c4"/></svg>
<svg style="left:1672px;top:398.4px;" width="10" height="10" viewBox="0 0 10 10"><path d="M0.6 3 V0.6 H3 M7 0.6 H9.4 V3 M9.4 7 V9.4 H7 M3 9.4 H0.6 V7" fill="none" stroke="#a9a2e8" stroke-width="1.1"/><path d="M0.6 4.2 V5.8 M9.4 4.2 V5.8 M4.2 0.6 H5.8 M4.2 9.4 H5.8" stroke="#a9a2e8" stroke-width="1.1"/><rect x="3" y="3" width="4" height="4" fill="#e6e6e6"/></svg>
<div class="t" style="left:1685.3px;top:396.3px;color:#d2d2d2;letter-spacing:0.18px;">Stage3<span style="font-size:11px;letter-spacing:0px">の画像</span></div>
<div class="a" style="left:1846.5px;top:416.5px;width:53.5px;height:22px;background:#414141;border:1px solid #242424;border-top:none;border-radius:0 0 3px 3px"></div>
<svg style="left:1857.5px;top:424px;" width="9" height="9" viewBox="0 0 9 9"><path d="M4.5 0 V9 M0 4.5 H9" stroke="#e0e0e0" stroke-width="1.8"/></svg>
<div class="a" style="left:1880.5px;top:428px;width:7px;height:1.6px;background:#e0e0e0;"></div>
<div class="t" style="left:1517px;top:441.8px;letter-spacing:0.53px;">Next Button</div>
<div class="fld" style="left:1668.0px;top:439.7px;width:247.5px;height:17.6px"></div>
<div class="a" style="left:1896.5px;top:440.7px;width:18px;height:15.6px;background:#333333;border-radius:0 2px 2px 0"></div>
<svg style="left:1899.7px;top:442.5px;" width="12" height="12" viewBox="0 0 12 12"><circle cx="6" cy="6" r="4.6" fill="none" stroke="#c4c4c4" stroke-width="1.1"/><circle cx="6" cy="6" r="1.7" fill="#c4c4c4"/></svg>
<svg style="left:1672px;top:443.7px;" width="10" height="10" viewBox="0 0 10 10"><circle cx="5" cy="5" r="4.6" fill="none" stroke="#c4c4c4" stroke-width="1" stroke-dasharray="1.4 1"/><circle cx="5" cy="5" r="3" fill="#c4c4c4"/></svg>
<div class="t" style="left:1685.3px;top:441.6px;color:#d2d2d2;letter-spacing:0.53px;">NextButton (Button)</div>
<div class="t" style="left:1517px;top:461.8px;letter-spacing:0.43px;">Buck Button</div>
<div class="fld" style="left:1668.0px;top:459.7px;width:247.5px;height:17.6px"></div>
<div class="a" style="left:1896.5px;top:460.7px;width:18px;height:15.6px;background:#333333;border-radius:0 2px 2px 0"></div>
<svg style="left:1899.7px;top:462.5px;" width="12" height="12" viewBox="0 0 12 12"><circle cx="6" cy="6" r="4.6" fill="none" stroke="#c4c4c4" stroke-width="1.1"/><circle cx="6" cy="6" r="1.7" fill="#c4c4c4"/></svg>
<svg style="left:1672px;top:463.7px;" width="10" height="10" viewBox="0 0 10 10"><circle cx="5" cy="5" r="4.6" fill="none" stroke="#c4c4c4" stroke-width="1" stroke-dasharray="1.4 1"/><circle cx="5" cy="5" r="3" fill="#c4c4c4"/></svg>
<div class="t" style="left:1685.3px;top:461.6px;color:#d2d2d2;letter-spacing:0.48px;">BuckButton (Button)</div>
<div class="t" style="left:1517px;top:481.8px;letter-spacing:0.41px;">Index</div>
<div class="fld" style="left:1668px;top:479.8px;width:247.5px;height:17.6px;"></div>
<div class="t" style="left:1673px;top:481.8px;color:#d2d2d2;">0</div>
<div class="a" style="left:1594.3px;top:515.5px;width:229.8px;height:23px;background:#585858;border:1px solid #303030;border-radius:3px"></div>
<div class="t" style="left:1662.5px;top:519px;color:#e4e4e4;letter-spacing:0.52px;">Add Component</div>
<div class="a" style="left:1498px;top:934px;width:422px;height:76px;background:#3c3c3c;"></div>
<div class="a" style="left:1498px;top:934px;width:422px;height:1px;background:#1f1f1f;"></div>
<div class="t b" style="left:1501.5px;top:939.5px;font-size:12.5px;color:#d2d2d2;letter-spacing:0.58px;">Asset Labels</div>
<div class="a" style="left:1498px;top:960px;width:422px;height:1px;background:#1f1f1f;"></div>
<div class="a" style="left:1896px;top:966.5px;width:19.5px;height:15.5px;background:#2a5fa8;border-radius:8px"></div>
<svg style="left:1901px;top:969px;" width="10" height="10" viewBox="0 0 10 10"><path d="M1 1 H5.2 L9.4 5.2 L5.2 9.4 L1 5.2 Z" fill="#f0f0f0"/><circle cx="3.2" cy="3.2" r="0.9" fill="#2a5fa8"/></svg>
<div class="t" style="left:1502px;top:989px;letter-spacing:0.41px;">AssetBundle</div>
<div class="dd" style="left:1594px;top:989px;width:239px;height:16.5px;"></div>
<div class="t" style="left:1597px;top:989px;color:#e0e0e0;letter-spacing:0.60px;">None</div>
<svg style="left:1819.25px;top:994.95px;" width="8.5" height="5.1" viewBox="0 0 8.5 5.1"><path d="M0 0 H8.5 L4.25 5.1 Z" fill="#c4c4c4"/></svg>
<div class="dd" style="left:1840px;top:989px;width:76px;height:16.5px;"></div>
<div class="t" style="left:1843px;top:989px;color:#e0e0e0;letter-spacing:0.60px;">None</div>
<svg style="left:1903.05px;top:994.95px;" width="8.5" height="5.1" viewBox="0 0 8.5 5.1"><path d="M0 0 H8.5 L4.25 5.1 Z" fill="#c4c4c4"/></svg>
<!-- project -->
<div class="tab" style="left:0px;top:702px;width:94px;height:24px;"></div>
<svg style="left:9px;top:709px;" width="12" height="10" viewBox="0 0 12 10"><path d="M0 1 a1 1 0 0 1 1 -1 H4.4 L5.6 1.6 H11 a1 1 0 0 1 1 1 V9 a1 1 0 0 1 -1 1 H1 a1 1 0 0 1 -1 -1 Z" fill="#c4c4c4"/></svg>
<div class="t" style="left:25px;top:706.8px;letter-spacing:0.44px;">Project</div>
<svg style="left:989.5px;top:709px;" width="9" height="10" viewBox="0 0 9 10"><path d="M2.4 4.6 V2.9 A2.1 2.1 0 0 1 6.6 2.9" fill="none" stroke="#c4c4c4" stroke-width="1.2"/><rect x="1.1" y="5.1" width="6.8" height="4.3" fill="none" stroke="#c4c4c4" stroke-width="1.2"/></svg>
<div class="a" style="left:1010px;top:708.9px;width:2px;height:2.1px;background:#c4c4c4;"></div>
<div class="a" style="left:1010px;top:712.7px;width:2px;height:2.1px;background:#c4c4c4;"></div>
<div class="a" style="left:1010px;top:716.5px;width:2px;height:2.1px;background:#c4c4c4;"></div>
<div class="a" style="left:0px;top:726px;width:1024px;height:20px;background:#3c3c3c;"></div>
<div class="a" style="left:0px;top:746px;width:1024px;height:1px;background:#232323;"></div>
<svg style="left:6.5px;top:729.3px;" width="13" height="13" viewBox="0 0 13 13"><path d="M6.5 0.5 V12.5 M0.5 6.5 H12.5" stroke="#d0d0d0" stroke-width="2"/></svg>
<svg style="left:23.05px;top:733.95px;" width="8.5" height="5.1" viewBox="0 0 8.5 5.1"><path d="M0 0 H8.5 L4.25 5.1 Z" fill="#c4c4c4"/></svg>
<div class="fld" style="left:558.5px;top:728px;width:317px;height:15.5px;"></div>
<svg style="left:563px;top:732px;" width="8" height="8" viewBox="0 0 8 8"><circle cx="3" cy="3" r="2.2" fill="none" stroke="#c4c4c4" stroke-width="1.1"/><path d="M4.6 4.6 L7.4 7.4" stroke="#c4c4c4" stroke-width="1.3"/></svg>
<svg style="left:860.5px;top:729.5px;" width="13" height="13" viewBox="0 0 13 13"><path d="M4 8.5 H1.5 V3 a1.5 1.5 0 0 1 1.5 -1.5 H10 a1.5 1.5 0 0 1 1.5 1.5 V10 a1.5 1.5 0 0 1 -1.5 1.5 H5.5 V8.5" fill="none" stroke="#c4c4c4" stroke-width="1.1"/><rect x="0.6" y="8.2" width="4.2" height="4.2" fill="#2a2a2a" stroke="#c4c4c4" stroke-width="1.1"/><path d="M5.6 7.4 L9.4 3.6 M6.4 3.6 H9.4 V6.6" fill="none" stroke="#c4c4c4" stroke-width="1.1"/></svg>
<div class="a" style="left:878px;top:726px;width:1px;height:20px;background:#2a2a2a;"></div>
<div class="a" style="left:904.5px;top:726px;width:1px;height:20px;background:#2a2a2a;"></div>
<div class="a" style="left:930.5px;top:726px;width:1px;height:20px;background:#2a2a2a;"></div>
<div class="a" style="left:956px;top:726px;width:1px;height:20px;background:#2a2a2a;"></div>
<div class="a" style="left:982px;top:726px;width:1px;height:20px;background:#2a2a2a;"></div>
<svg style="left:884px;top:729.5px;" width="14" height="13" viewBox="0 0 14 13"><rect x="1.5" y="0.5" width="6" height="5" fill="#c4c4c4"/><circle cx="4" cy="9.4" r="3.4" fill="#c4c4c4"/><path d="M9.8 2.4 L13.6 10 H7.6 Z" fill="#c4c4c4"/></svg>
<svg style="left:911px;top:731px;" width="11" height="11" viewBox="0 0 11 11"><path d="M4.6 0.6 H10.4 V6.4 L5.2 10.6 L0.4 5.8 Z" fill="#c4c4c4" transform="rotate(8 5.5 5.5)"/><circle cx="8.2" cy="2.9" r="1" fill="#3c3c3c"/></svg>
<svg style="left:935.5px;top:729px;" width="14" height="14" viewBox="0 0 14 14"><circle cx="7" cy="7" r="6.8" fill="#d8d8d8"/><rect x="6.1" y="2.6" width="1.8" height="6" rx="0.8" fill="#3c3c3c"/><circle cx="7" cy="10.8" r="1.1" fill="#3c3c3c"/></svg>
<svg style="left:962.5px;top:729.5px;" width="13" height="13" viewBox="0 0 13 13"><path d="M6.5 0.3 L8.4 4.4 L12.9 4.9 L9.6 8 L10.5 12.5 L6.5 10.2 L2.5 12.5 L3.4 8 L0.1 4.9 L4.6 4.4 Z" fill="#7e7e7e"/></svg>
<svg style="left:988.5px;top:731px;" width="14" height="10" viewBox="0 0 14 10"><path d="M0.6 5 C3 0.6 11 0.6 13.4 5 C11 9.4 3 9.4 0.6 5 Z" fill="none" stroke="#6e6e6e" stroke-width="1.1"/><circle cx="7" cy="5" r="2.4" fill="none" stroke="#6e6e6e" stroke-width="1.2"/></svg>
<div class="t" style="left:1004.5px;top:728.2px;color:#b0b0b0;letter-spacing:1.14px;">22</div>
<div class="a" style="left:0px;top:747px;width:200px;height:263px;background:#383838;"></div>
<div class="a" style="left:200px;top:747px;width:1px;height:263px;background:#232323;"></div>
<div class="a" style="left:0px;top:810px;width:200px;height:16px;background:#4d4d4d;"></div>
<svg style="left:4.95px;top:750.35px;" width="7.5" height="9.5" viewBox="0 0 7.5 9.5"><path d="M0 0 V9.5 L7.5 4.75 Z" fill="#6a6a6a"/></svg>
<svg style="left:18px;top:748.5px;" width="13" height="13" viewBox="0 0 13 13"><path d="M6.5 0.3 L8.4 4.4 L12.9 4.9 L9.6 8 L10.5 12.5 L6.5 10.2 L2.5 12.5 L3.4 8 L0.1 4.9 L4.6 4.4 Z" fill="#c4c4c4"/></svg>
<div class="t b" style="left:34.5px;top:747px;font-size:12.5px;letter-spacing:0.55px;">Favorites</div>
<svg style="left:4px;top:782px;" width="10" height="8" viewBox="0 0 10 8"><path d="M0 0 H10 L5 8 Z" fill="#6a6a6a"/></svg>
<svg style="left:18px;top:780.5px;" width="14" height="11" viewBox="0 0 14 11"><path d="M0.6 10.4 V1.6 a1 1 0 0 1 1 -1 H4.6 L6 2.2 H10.6 a1 1 0 0 1 1 1 V4.2" fill="none" stroke="#c4c4c4" stroke-width="1.2"/><path d="M2.6 4.6 H13.8 L11.6 11 H0.4 Z" fill="#c4c4c4"/></svg>
<div class="t b" style="left:34.5px;top:777.8px;font-size:12.5px;letter-spacing:0.50px;">Assets</div>
<svg style="left:32px;top:796.4px;" width="12.2" height="10.2" viewBox="0 0 13 11"><path d="M0 1.2 a1.2 1.2 0 0 1 1.2 -1.2 H4.6 L6 1.8 H11.8 a1.2 1.2 0 0 1 1.2 1.2 V9.8 a1.2 1.2 0 0 1 -1.2 1.2 H1.2 a1.2 1.2 0 0 1 -1.2 -1.2 Z" fill="#c4c4c4"/></svg>
<div class="t" style="left:48px;top:794px;letter-spacing:-0.17px;">FBX</div>
<svg style="left:32px;top:812.4px;" width="12.2" height="10.2" viewBox="0 0 13 11"><path d="M0 1.2 a1.2 1.2 0 0 1 1.2 -1.2 H4.6 L6 1.8 H11.8 a1.2 1.2 0 0 1 1.2 1.2 V9.8 a1.2 1.2 0 0 1 -1.2 1.2 H1.2 a1.2 1.2 0 0 1 -1.2 -1.2 Z" fill="#c4c4c4"/></svg>
<div class="t" style="left:48px;top:810px;letter-spacing:0.23px;">Image_Tutoraial</div>
<svg style="left:32px;top:828.4px;" width="12.2" height="10.2" viewBox="0 0 13 11"><path d="M0 1.2 a1.2 1.2 0 0 1 1.2 -1.2 H4.6 L6 1.8 H11.8 a1.2 1.2 0 0 1 1.2 1.2 V9.8 a1.2 1.2 0 0 1 -1.2 1.2 H1.2 a1.2 1.2 0 0 1 -1.2 -1.2 Z" fill="#c4c4c4"/></svg>
<div class="t" style="left:48px;top:826px;letter-spacing:0.49px;">Scenes</div>
<svg style="left:32px;top:844.4px;" width="12.2" height="10.2" viewBox="0 0 13 11"><path d="M0 1.2 a1.2 1.2 0 0 1 1.2 -1.2 H4.6 L6 1.8 H11.8 a1.2 1.2 0 0 1 1.2 1.2 V9.8 a1.2 1.2 0 0 1 -1.2 1.2 H1.2 a1.2 1.2 0 0 1 -1.2 -1.2 Z" fill="#c4c4c4"/></svg>
<div class="t" style="left:48px;top:842px;letter-spacing:0.64px;">Scripts</div>
<svg style="left:18.75px;top:845.05px;" width="7.5" height="9.5" viewBox="0 0 7.5 9.5"><path d="M0 0 V9.5 L7.5 4.75 Z" fill="#6a6a6a"/></svg>
<svg style="left:32px;top:860.4px;" width="12.2" height="10.2" viewBox="0 0 13 11"><path d="M0 1.2 a1.2 1.2 0 0 1 1.2 -1.2 H4.6 L6 1.8 H11.8 a1.2 1.2 0 0 1 1.2 1.2 V9.8 a1.2 1.2 0 0 1 -1.2 1.2 H1.2 a1.2 1.2 0 0 1 -1.2 -1.2 Z" fill="#c4c4c4"/></svg>
<div class="t" style="left:48px;top:858px;letter-spacing:0.59px;">Settings</div>
<svg style="left:32px;top:876.4px;" width="12.2" height="10.2" viewBox="0 0 13 11"><path d="M0 1.2 a1.2 1.2 0 0 1 1.2 -1.2 H4.6 L6 1.8 H11.8 a1.2 1.2 0 0 1 1.2 1.2 V9.8 a1.2 1.2 0 0 1 -1.2 1.2 H1.2 a1.2 1.2 0 0 1 -1.2 -1.2 Z" fill="#c4c4c4"/></svg>
<div class="t" style="left:48px;top:874px;letter-spacing:0.47px;">TextMesh Pro</div>
<svg style="left:18.75px;top:877.05px;" width="7.5" height="9.5" viewBox="0 0 7.5 9.5"><path d="M0 0 V9.5 L7.5 4.75 Z" fill="#6a6a6a"/></svg>
<svg style="left:32px;top:892.4px;" width="12.2" height="10.2" viewBox="0 0 13 11"><path d="M0 1.2 a1.2 1.2 0 0 1 1.2 -1.2 H4.6 L6 1.8 H11.8 a1.2 1.2 0 0 1 1.2 1.2 V9.8 a1.2 1.2 0 0 1 -1.2 1.2 H1.2 a1.2 1.2 0 0 1 -1.2 -1.2 Z" fill="#c4c4c4"/></svg>
<div class="t" style="left:48px;top:890px;letter-spacing:0.40px;">TutorialInfo</div>
<svg style="left:18.75px;top:893.05px;" width="7.5" height="9.5" viewBox="0 0 7.5 9.5"><path d="M0 0 V9.5 L7.5 4.75 Z" fill="#6a6a6a"/></svg>
<svg style="left:4.95px;top:909.25px;" width="7.5" height="9.5" viewBox="0 0 7.5 9.5"><path d="M0 0 V9.5 L7.5 4.75 Z" fill="#6a6a6a"/></svg>
<svg style="left:18px;top:907.9px;" width="12.2" height="10.2" viewBox="0 0 13 11"><path d="M0 1.2 a1.2 1.2 0 0 1 1.2 -1.2 H4.6 L6 1.8 H11.8 a1.2 1.2 0 0 1 1.2 1.2 V9.8 a1.2 1.2 0 0 1 -1.2 1.2 H1.2 a1.2 1.2 0 0 1 -1.2 -1.2 Z" fill="#c4c4c4"/></svg>
<div class="t b" style="left:34.5px;top:905.8px;font-size:12.5px;letter-spacing:0.54px;">Packages</div>
<div class="a" style="left:201px;top:747px;width:823px;height:21px;background:#414141;"></div>
<div class="a" style="left:201px;top:768px;width:823px;height:221px;background:#333333;"></div>
<div class="a" style="left:201px;top:989px;width:823px;height:21px;background:#414141;"></div>
<div class="t" style="left:204.5px;top:748.5px;color:#a8a8a8;letter-spacing:0.50px;">Assets</div>
<svg style="left:250.5px;top:752.5px;" width="5" height="8" viewBox="0 0 5 8"><path d="M0.6 0.6 L4.2 4 L0.6 7.4" fill="none" stroke="#a8a8a8" stroke-width="1.2"/></svg>
<div class="t b" style="left:260.5px;top:748.5px;font-size:12.5px;letter-spacing:0.43px;">Image_Tutoraial</div>
<svg style="left:223px;top:781.5px;" width="43" height="50" viewBox="0 0 43 50"><path d="M3 0 H31 Q33 0 34.5 1.5 L41.5 8.5 Q43 10 43 12 V47 a3 3 0 0 1 -3 3 H3 a3 3 0 0 1 -3 -3 V3 a3 3 0 0 1 3 -3 Z" fill="#f0f0f0"/><path d="M32.5 0.3 V8 a2.5 2.5 0 0 0 2.5 2.5 H42.7 Z" fill="#dcdcdc"/><path d="M17.6 10 L14.2 42 M28.2 10 L24.8 42 M9.6 21 H34.6 M8.4 30.4 H33.4" stroke="#2c7a34" stroke-width="4" fill="none"/></svg>
<div class="t" style="left:217px;top:835.8px;font-size:10px;color:#c4c4c4;">Image_Sp...</div>
<svg style="left:284.5px;top:788px;overflow:hidden" width="57.5" height="38.2" viewBox="0 0 57.5 38.2"><defs><linearGradient id="s1" x1="0" y1="0" x2="0" y2="1"><stop offset="0" stop-color="#3d9ae6"/><stop offset="0.6" stop-color="#a6dcf3"/></linearGradient><linearGradient id="g1" x1="0" y1="0" x2="0" y2="1"><stop offset="0" stop-color="#6cc744"/><stop offset="1" stop-color="#3c9f2c"/></linearGradient></defs><rect width="57.5" height="38.2" fill="url(#s1)"/><path d="M0 5 a3 3 0 0 1 5 -2 a3 3 0 0 1 3 5 H0 Z M47 8 a3 3 0 0 1 4 -4 a3.5 3.5 0 0 1 6.5 1 V9 H47 Z M37 14 a2 2 0 0 1 3 -2 a2 2 0 0 1 4 2 Z" fill="#f4f9fd"/><path d="M6 24 L17 13 L23 19 L27 16 L31 20 L35 18 L44 25 Z" fill="#5a9ad2"/><path d="M17 13 L23 19 L20 24 H12 Z" fill="#4a86c0"/><path d="M0 23 C10 20 22 22 30 23 C40 24 50 22 57.5 23 V38.2 H0 Z" fill="url(#g1)"/><path d="M0 26 C14 24 26 27 40 26 L57.5 27 V29 C40 28 20 29 0 29 Z" fill="#7ed24c" opacity="0.6"/><path d="M12 38.2 C17 34 26 32 34 29.5 L38 30 C32 33 27 35 29 38.2 Z" fill="#d6b263"/><path d="M0 9 a4 4 0 0 1 6 3 a3.5 3.5 0 0 1 0 7 L4 21 V24 H2.5 V21 H0 Z" fill="#48a53a"/><circle cx="43" cy="20" r="2.8" fill="#3f9e3a"/><rect x="42.5" y="22" width="1" height="3" fill="#6a4a2a"/><path d="M47 24 a5 5 0 0 1 2 -9 a5 5 0 0 1 8.5 -3 V25 Z" fill="#4aa63a"/><path d="M44 36 a4 4 0 0 1 2 -7 a4.5 4.5 0 0 1 8 0 a3.5 3.5 0 0 1 2 7 Z" fill="#3c9a30"/><path d="M3 34 a3 3 0 0 1 2 -5 a3 3 0 0 1 5 1 a2.5 2.5 0 0 1 0 4 Z" fill="#48a838"/><text x="27.5" y="10.4" font-size="5.8" font-family="Liberation Sans,sans-serif" font-weight="bold" fill="#ffffff" text-anchor="middle" stroke="#2a3a5a" stroke-width="0.5" paint-order="stroke">STAGE 1</text></svg>
<svg style="left:332.5px;top:797.9px;" width="17" height="17" viewBox="0 0 17 17"><circle cx="8.5" cy="8.5" r="8" fill="#d8d8d8" stroke="#222" stroke-opacity="0.4" stroke-width="1"/><path d="M6 4.5 L13 8.5 L6 12.5 Z" fill="#3a3a3a"/></svg>
<svg style="left:353.5px;top:788px;overflow:hidden" width="57.5" height="38.2" viewBox="0 0 57.5 38.2"><defs><linearGradient id="s2" x1="0" y1="0" x2="0" y2="1"><stop offset="0" stop-color="#3a97e4"/><stop offset="0.58" stop-color="#b2e0f5"/></linearGradient><linearGradient id="w2" x1="0" y1="0" x2="0" y2="1"><stop offset="0" stop-color="#1c66c2"/><stop offset="1" stop-color="#2f95dc"/></linearGradient><linearGradient id="m2" x1="0" y1="0" x2="0" y2="1"><stop offset="0" stop-color="#3aa654"/><stop offset="1" stop-color="#1f7a3e"/></linearGradient></defs><rect width="57.5" height="38.2" fill="url(#s2)"/><path d="M0 22 V16 a3 3 0 0 1 5 -1 a3 3 0 0 1 5 3 a2.5 2.5 0 0 1 2 4 Z M33 21 a3 3 0 0 1 4 -4 a3.5 3.5 0 0 1 6 0 a3 3 0 0 1 4 4 Z" fill="#f2f8fc"/><path d="M11 22.5 C17 21 22 14 26 12.5 C30 14 38 21 44 22.5 Z" fill="url(#m2)"/><rect y="22" width="57.5" height="9" fill="url(#w2)"/><path d="M0 30.4 C14 29 30 31.2 57.5 29.8 V31.6 H0 Z" fill="#eaf6fb"/><path d="M0 31 C16 29.8 36 31.6 57.5 30.6 V38.2 H0 Z" fill="#e6c585"/><path d="M0 35 H57.5 V38.2 H0 Z" fill="#d9b272" opacity="0.7"/><path d="M0 0 H10 C12 2 12 5 11 8 C9 5 8 4 7 4 C9 8 9 12 8 16 C6 12 5 9 4 8 C4 11 3 13 0 15 Z" fill="#2f9c3e"/><path d="M57.5 2 C53 1 49 3 45 7 C48 6 50 6 51 7 C48 9 46 12 46 16 C49 12 51 11 53 11 C52 13 52 15 53 17 C54 14 56 12 57.5 12 Z" fill="#2f9c3e"/><path d="M51 34 C50 30 52 27 57.5 26 V34 Z M0 27 C3 27 4 30 3 33 L0 33 Z" fill="#2b8f3a"/><text x="27.5" y="10" font-size="5.8" font-family="Liberation Sans,sans-serif" font-weight="bold" fill="#ffffff" text-anchor="middle">Stage 2</text></svg>
<svg style="left:401.5px;top:797.9px;" width="17" height="17" viewBox="0 0 17 17"><circle cx="8.5" cy="8.5" r="8" fill="#d8d8d8" stroke="#222" stroke-opacity="0.4" stroke-width="1"/><path d="M6 4.5 L13 8.5 L6 12.5 Z" fill="#3a3a3a"/></svg>
<svg style="left:422.5px;top:788px;overflow:hidden" width="57.5" height="38.2" viewBox="0 0 57.5 38.2"><defs><linearGradient id="s3" x1="0" y1="0" x2="0" y2="1"><stop offset="0" stop-color="#2c98e8"/><stop offset="0.6" stop-color="#8ad6f2"/></linearGradient><linearGradient id="d3" x1="0" y1="0" x2="0" y2="1"><stop offset="0" stop-color="#e9a438"/><stop offset="0.45" stop-color="#efba3a"/><stop offset="1" stop-color="#d97a18"/></linearGradient><linearGradient id="r3" x1="0" y1="0" x2="0" y2="1"><stop offset="0" stop-color="#cc5e2c"/><stop offset="1" stop-color="#8e3a1e"/></linearGradient></defs><rect width="57.5" height="38.2" fill="url(#s3)"/><path d="M0 9 V3 a3 3 0 0 1 5 -1 a3 3 0 0 1 2 5 a2 2 0 0 1 3 2 l3 2 H6 Z M40 13.5 a2.5 2.5 0 0 1 4 -2 a3 3 0 0 1 5 -1 a3 3 0 0 1 5 1 L57.5 6 V13.5 Z M8 19 a2 2 0 0 1 3 -2 a2.5 2.5 0 0 1 4.5 2 Z" fill="#f3f9fd"/><path d="M0 9 H6 L7 17 L10 20 L15 22 L20 24 L24 23 L25 20 H26.5 L28 23 L31 23 L33 16 H36.5 L38.5 21 L41 23 L44 20 L47 18 L52 21 L57.5 19 V28 H0 Z" fill="url(#r3)"/><path d="M22 23.5 L23.5 20 H25.5 L27 23.5 Z M41 22.5 L44 20.5 L47 22.5 Z" fill="#d99a74"/><path d="M0 27 C6 25 14 24.5 22 24 C34 23.2 46 24 57.5 25.5 V38.2 H0 Z" fill="url(#d3)"/><path d="M0 28 L8 26 L14 29 L6 32 L0 31 Z M48 30 L57.5 27 V38.2 H50 Z" fill="#b5501f" opacity="0.75"/><path d="M18 38.2 C22 32 27 28 30 25 L34 25 C34 29 36 33 40 38.2 Z" fill="#f2c84a" opacity="0.75"/><text x="28.5" y="7.6" font-size="4.6" font-family="Liberation Sans,sans-serif" font-weight="bold" fill="#ffffff" text-anchor="middle">STAGE 3</text></svg>
<svg style="left:470.5px;top:797.9px;" width="17" height="17" viewBox="0 0 17 17"><circle cx="8.5" cy="8.5" r="8" fill="#d8d8d8" stroke="#222" stroke-opacity="0.4" stroke-width="1"/><path d="M6 4.5 L13 8.5 L6 12.5 Z" fill="#3a3a3a"/></svg>
<div class="a" style="left:282px;top:835.7px;width:63px;height:14px;background:#4d4d4d;border-radius:3px"></div>
<div class="t" style="left:288.5px;top:835.8px;font-size:10px;color:#c4c4c4;letter-spacing:-0.06px;">Stage1<span style="font-size:9.5px;letter-spacing:0px">の</span>...</div>
<div class="a" style="left:351px;top:835.7px;width:63px;height:14px;background:#4d4d4d;border-radius:3px"></div>
<div class="t" style="left:357.5px;top:835.8px;font-size:10px;color:#c4c4c4;letter-spacing:-0.06px;">Stage2<span style="font-size:9.5px;letter-spacing:0px">の</span>...</div>
<div class="a" style="left:420px;top:835.7px;width:63px;height:14px;background:#4d4d4d;border-radius:3px"></div>
<div class="t" style="left:426.5px;top:835.8px;font-size:10px;color:#c4c4c4;letter-spacing:-0.06px;">Stage3<span style="font-size:9.5px;letter-spacing:0px">の</span>...</div>
<svg style="left:203.5px;top:994px;" width="16" height="11" viewBox="0 0 16 11"><rect width="16" height="11" fill="#56a8e8"/><path d="M0 6 L4 3.6 L7 5.6 L11 3 L16 6 V11 H0 Z" fill="#49a83c"/><path d="M0 1.2 H16" stroke="#e8f2f8" stroke-width="1.2" stroke-dasharray="3 2"/></svg>
<div class="t" style="left:221px;top:992.5px;letter-spacing:0.26px;">Assets/Image_Tutoraial/Stage1<span style="font-size:11px;letter-spacing:0px">の画像</span>.png</div>
<div class="a" style="left:953px;top:999.5px;width:55.5px;height:1.2px;background:#5e5e5e;"></div>
<div class="a" style="left:976px;top:995px;width:10px;height:10px;background:#a0a0a0;border-radius:50%"></div>
<!-- status -->
<div class="a" style="left:0px;top:1010px;width:1920px;height:22px;background:#191919;"></div>
<div class="a" style="left:1840px;top:1012px;width:1px;height:20px;background:#212121;"></div>
<div class="a" style="left:1867px;top:1012px;width:1px;height:20px;background:#212121;"></div>
<div class="a" style="left:1893.5px;top:1012px;width:1px;height:20px;background:#212121;"></div>
<svg style="left:1845.5px;top:1014px;" width="15" height="15" viewBox="0 0 15 15"><g transform="rotate(18 6 8)"><ellipse cx="6" cy="8.6" rx="3" ry="4.4" fill="#f6c21a"/><circle cx="6" cy="3.6" r="1.9" fill="#f6c21a"/><path d="M4.8 2.4 L3.4 0.2 M7.2 2.4 L8.6 0.2 M3.4 6.4 L0.6 4.8 M8.6 6.4 L11.4 4.8 M3 8.8 H0.2 M3.6 11.2 L1.2 13.8 M8.4 11.2 L10.8 13.8" stroke="#f6c21a" stroke-width="1.2" fill="none"/></g><rect x="9.6" y="6.8" width="2.2" height="5" fill="#191919"/><rect x="10" y="7" width="1.9" height="4.4" fill="#f2e283"/><rect x="10" y="12.4" width="1.9" height="1.9" fill="#f2e283"/></svg>
<svg style="left:1873.5px;top:1014.5px;" width="14" height="14" viewBox="0 0 14 14"><ellipse cx="7" cy="3.2" rx="5.6" ry="2.6" fill="#c4c4c4"/><path d="M1.4 5.2 C1.4 8.6 12.6 8.6 12.6 5.2 V7.2 C12.6 10.6 1.4 10.6 1.4 7.2 Z M1.4 9.2 C1.4 12.6 12.6 12.6 12.6 9.2 V11 C12.6 14.4 1.4 14.4 1.4 11 Z" fill="#c4c4c4"/><path d="M2 1.4 L13 13.4" stroke="#191919" stroke-width="2.2"/><path d="M1.2 1.6 L12.2 13.6" stroke="#c4c4c4" stroke-width="1.1"/></svg>
<svg style="left:1899px;top:1015px;" width="14" height="14" viewBox="0 0 14 14"><circle cx="7" cy="7" r="6.2" fill="none" stroke="#c4c4c4" stroke-width="1.3"/><path d="M3.9 7.1 L6.2 9.4 L10.3 4.9" fill="none" stroke="#d0d0d0" stroke-width="1.8"/></svg>
</div>
</body>
</html>
